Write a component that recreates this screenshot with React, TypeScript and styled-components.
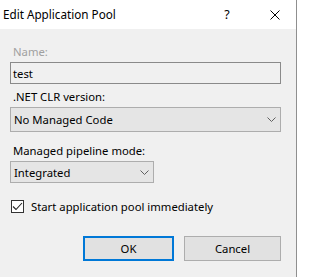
import React from "react";
import styled, { createGlobalStyle } from "styled-components";

const Global = createGlobalStyle`
  html, body { margin: 0; padding: 0; background: #ffffff; }
  body { font-family: "Noto Sans", "Segoe UI", sans-serif; font-size: 11.3px; color: #000; }
  * { box-sizing: border-box; }
`;

const Window = styled.div`
  width: 297px;
  height: 277px;
  background: #f0f0f0;
  border-right: 1px solid #8f8f8f;
  display: flex;
  flex-direction: column;
  overflow: hidden;
`;

const TitleBar = styled.div`
  height: 29px;
  background: #ffffff;
  display: flex;
  align-items: center;
  padding-left: 3px;
  flex-shrink: 0;
`;

const Title = styled.div`
  flex: 1;
  font-size: 11.7px;
  line-height: 15px;
  margin-top: -1px;
`;

const CaptionButton = styled.div<{ $w: number; $pl?: number }>`
  width: ${(p) => p.$w}px;
  height: 29px;
  display: flex;
  align-items: center;
  justify-content: center;
  padding-left: ${(p) => p.$pl ?? 0}px;
  font-size: 12.5px;
  color: #000;
`;

const Body = styled.div`
  display: flex;
  flex-direction: column;
  padding: 15px 0 0 10px;
`;

const Label = styled.div<{ $mt?: number; $disabled?: boolean }>`
  line-height: 15px;
  padding-left: 3px;
  margin-top: ${(p) => p.$mt ?? 0}px;
  margin-bottom: 3px;
  color: ${(p) => (p.$disabled ? "#a0a0a0" : "#000")};
`;

const TextBox = styled.div`
  width: 271px;
  height: 22px;
  border: 1px solid #8a8a8a;
  background: #f0f0f0;
  display: flex;
  align-items: center;
  padding-left: 2px;
  line-height: 15px;
`;

const Combo = styled.div<{ $w: number; $h: number }>`
  width: ${(p) => p.$w}px;
  height: ${(p) => p.$h}px;
  border: 1px solid #adadad;
  background: #e5e5e5;
  display: flex;
  align-items: center;
  justify-content: space-between;
  padding: 0 3px 0 3px;
  line-height: 15px;
`;

const Chevron = styled.svg`
  width: 9px;
  height: 5px;
  margin-right: 1px;
  flex-shrink: 0;
`;

const CheckRow = styled.label`
  display: flex;
  align-items: center;
  gap: 7px;
  margin-top: 16px;
  padding-left: 1px;
  line-height: 15px;
`;

const Box = styled.span`
  width: 13px;
  height: 13px;
  border: 1px solid #333333;
  background: #ffffff;
  display: flex;
  align-items: center;
  justify-content: center;
`;

const Buttons = styled.div`
  display: flex;
  gap: 10px;
  margin-top: 22px;
  padding-left: 73px;
`;

const Button = styled.div<{ $w: number; $default?: boolean }>`
  width: ${(p) => p.$w}px;
  height: 25px;
  background: #e1e1e1;
  border: ${(p) => (p.$default ? "2px solid #0078d7" : "1px solid #adadad")};
  display: flex;
  align-items: center;
  justify-content: center;
  line-height: 15px;
`;

const ChevronIcon = () => (
  <Chevron viewBox="0 0 9 5">
    <path d="M0.5 0.5 L4.5 4.5 L8.5 0.5" fill="none" stroke="#606060" strokeWidth="1" />
  </Chevron>
);

export default function App() {
  return (
    <>
      <Global />
      <Window>
        <TitleBar>
          <Title>Edit Application Pool</Title>
          <CaptionButton $w={46}>?</CaptionButton>
          <CaptionButton $w={46} $pl={4}>
            <svg width="10" height="10" viewBox="0 0 10 10">
              <path d="M0.5 0.5 L9.5 9.5 M9.5 0.5 L0.5 9.5" stroke="#000" strokeWidth="1" fill="none" />
            </svg>
          </CaptionButton>
        </TitleBar>
        <Body>
          <Label $disabled>Name:</Label>
          <TextBox>test</TextBox>
          <Label $mt={5}>.NET CLR version:</Label>
          <Combo $w={271} $h={25}>
            <span>No Managed Code</span>
            <ChevronIcon />
          </Combo>
          <Label $mt={11}>Managed pipeline mode:</Label>
          <Combo $w={144} $h={22}>
            <span>Integrated</span>
            <ChevronIcon />
          </Combo>
          <CheckRow>
            <Box>
              <svg width="11" height="9" viewBox="0 0 11 9">
                <path d="M1 4.5 L4 7.5 L10 1" stroke="#222" strokeWidth="1.1" fill="none" />
              </svg>
            </Box>
            <span>Start application pool immediately</span>
          </CheckRow>
          <Buttons>
            <Button $w={91} $default>OK</Button>
            <Button $w={97}>Cancel</Button>
          </Buttons>
        </Body>
      </Window>
    </>
  );
}
